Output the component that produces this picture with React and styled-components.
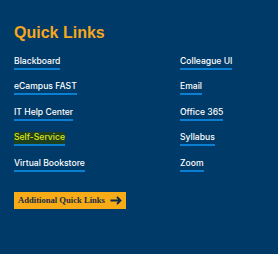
import React from "react";
import styled, { createGlobalStyle } from "styled-components";

const GlobalStyle = createGlobalStyle`
  html, body {
    margin: 0;
    padding: 0;
    background: #003a68;
  }
`;

const left = ["Blackboard", "eCampus FAST", "IT Help Center", "Self-Service", "Virtual Bookstore"];
const right = ["Colleague UI", "Email", "Office 365", "Syllabus", "Zoom"];

const App = () => (
  <Panel>
    <GlobalStyle />
    <Title>Quick Links</Title>
    <LinkGrid>
      {left.map((l, i) => (
        <React.Fragment key={l}>
          <LinkItem href="#" $active={l === "Self-Service"}>{l}</LinkItem>
          <LinkItem href="#">{right[i]}</LinkItem>
        </React.Fragment>
      ))}
    </LinkGrid>
    <MoreButton href="#">
      Additional Quick Links
      <svg width="12" height="9" viewBox="0 0 12 9" fill="none">
        <path d="M0.5 4.5H10.5M7 1L10.5 4.5L7 8" stroke="#0b2a4a" strokeWidth="1.8" />
      </svg>
    </MoreButton>
  </Panel>
);

const Panel = styled.section`
  width: 278px;
  height: 254px;
  box-sizing: border-box;
  padding: 24px 14px 0 14px;
  background: #003a68;
  font-family: "Inter", "Liberation Sans", sans-serif;
`;

const Title = styled.h2`
  margin: 0 0 15px 0;
  font-family: "Liberation Sans", Arial, sans-serif;
  font-weight: 700;
  font-size: 16px;
  line-height: 17px;
  color: #f6a71c;
`;

const LinkGrid = styled.div`
  display: grid;
  grid-template-columns: 166px 1fr;
  grid-auto-rows: 25.4px;
  align-items: start;
`;

const LinkItem = styled.a`
  justify-self: start;
  font-size: 8.6px;
  font-weight: 500;
  line-height: 11px;
  color: ${(p) => (p.$active ? "#dfe61a" : "#ffffff")};
  text-decoration: none;
  border-bottom: 2px solid #0a7fd1;
  padding-bottom: 1px;
  ${(p) => (p.$active ? "background: #1f401f;" : "")}
`;

const MoreButton = styled.a`
  display: inline-flex;
  align-items: center;
  gap: 5px;
  margin-top: 9px;
  height: 17px;
  padding: 0 4px 0 4px;
  background: #f7ab16;
  color: #1c2b44;
  text-decoration: none;
  font-family: "Liberation Serif", "Times New Roman", serif;
  font-size: 8.6px;
  font-weight: 700;
`;

export default App;
